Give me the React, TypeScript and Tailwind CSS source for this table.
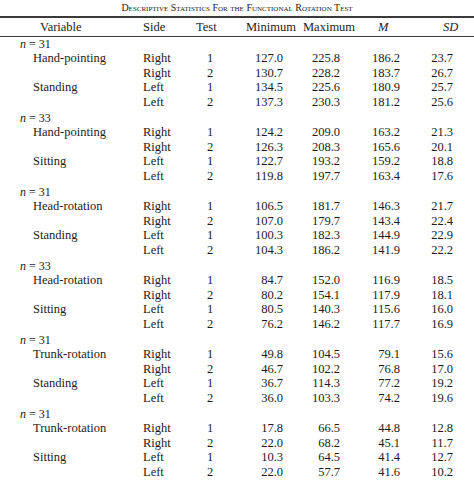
const groups = [
  {
    n: "31",
    rows: [
      ["Hand-pointing", "Right", "1", "127.0", "225.8", "186.2", "23.7"],
      ["", "Right", "2", "130.7", "228.2", "183.7", "26.7"],
      ["Standing", "Left", "1", "134.5", "225.6", "180.9", "25.7"],
      ["", "Left", "2", "137.3", "230.3", "181.2", "25.6"],
    ],
  },
  {
    n: "33",
    rows: [
      ["Hand-pointing", "Right", "1", "124.2", "209.0", "163.2", "21.3"],
      ["", "Right", "2", "126.3", "208.3", "165.6", "20.1"],
      ["Sitting", "Left", "1", "122.7", "193.2", "159.2", "18.8"],
      ["", "Left", "2", "119.8", "197.7", "163.4", "17.6"],
    ],
  },
  {
    n: "31",
    rows: [
      ["Head-rotation", "Right", "1", "106.5", "181.7", "146.3", "21.7"],
      ["", "Right", "2", "107.0", "179.7", "143.4", "22.4"],
      ["Standing", "Left", "1", "100.3", "182.3", "144.9", "22.9"],
      ["", "Left", "2", "104.3", "186.2", "141.9", "22.2"],
    ],
  },
  {
    n: "33",
    rows: [
      ["Head-rotation", "Right", "1", "84.7", "152.0", "116.9", "18.5"],
      ["", "Right", "2", "80.2", "154.1", "117.9", "18.1"],
      ["Sitting", "Left", "1", "80.5", "140.3", "115.6", "16.0"],
      ["", "Left", "2", "76.2", "146.2", "117.7", "16.9"],
    ],
  },
  {
    n: "31",
    rows: [
      ["Trunk-rotation", "Right", "1", "49.8", "104.5", "79.1", "15.6"],
      ["", "Right", "2", "46.7", "102.2", "76.8", "17.0"],
      ["Standing", "Left", "1", "36.7", "114.3", "77.2", "19.2"],
      ["", "Left", "2", "36.0", "103.3", "74.2", "19.6"],
    ],
  },
  {
    n: "31",
    rows: [
      ["Trunk-rotation", "Right", "1", "17.8", "66.5", "44.8", "12.8"],
      ["", "Right", "2", "22.0", "68.2", "45.1", "11.7"],
      ["Sitting", "Left", "1", "10.3", "64.5", "41.4", "12.7"],
      ["", "Left", "2", "22.0", "57.7", "41.6", "10.2"],
    ],
  },
]

const cols = "grid grid-cols-[135px_55px_42px_58px_58px_60px_66px]"

export default function App() {
  return (
    <div className="w-[474px] h-[481px] overflow-hidden bg-white text-[#1c1c1c] font-['Liberation_Serif',serif] text-[12px]">
      {/* Title */}
      <div className="h-[16px] leading-[16px] text-center text-[10px] [font-variant-caps:small-caps]">
        Descriptive Statistics For the Functional Rotation Test
      </div>

      {/* Header */}
      <div className={`${cols} h-[21px] items-center border-t-2 border-b border-[#3a3a3a] whitespace-nowrap text-[12.5px]`}>
        <div className="pl-[40px]">Variable</div>
        <div className="pl-[8px]">Side</div>
        <div className="pl-[6px]">Test</div>
        <div className="pl-[14px]">Minimum</div>
        <div className="pl-[13px]">Maximum</div>
        <div className="pl-[30px] italic">M</div>
        <div className="pl-[35px] italic">SD</div>
      </div>

      {/* Body */}
      <div>
        {groups.map((g, gi) => (
          <div key={gi} className="mb-[2px]">
            <div className="h-[14px] leading-[14px] pl-[20px]">
              <span className="italic">n</span> = {g.n}
            </div>
            {g.rows.map((r, ri) => (
              <div key={ri} className={`${cols} h-[14.5px] leading-[14.5px] whitespace-nowrap text-[12.5px]`}>
                <div className="pl-[33px]">{r[0]}</div>
                <div className="pl-[8px]">{r[1]}</div>
                <div className="text-center pr-[2px]">{r[2]}</div>
                <div className="text-right pr-[7px]">{r[3]}</div>
                <div className="text-right pr-[8px]">{r[4]}</div>
                <div className="text-right pr-[8px]">{r[5]}</div>
                <div className="text-right pr-[21px]">{r[6]}</div>
              </div>
            ))}
          </div>
        ))}
      </div>
    </div>
  )
}
